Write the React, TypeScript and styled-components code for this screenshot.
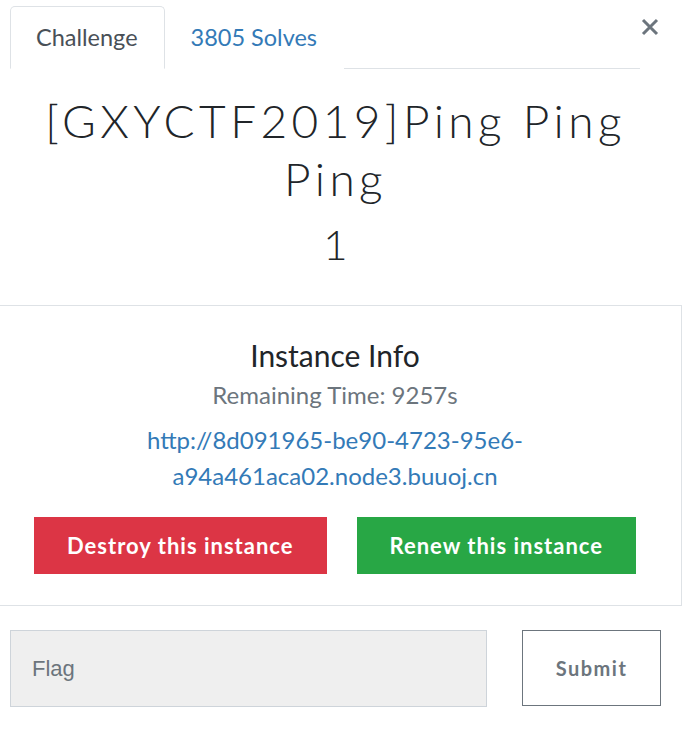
import styled, { createGlobalStyle } from 'styled-components';

const GlobalStyle = createGlobalStyle`
  html, body {
    margin: 0;
    padding: 0;
    background: #fff;
  }
  body {
    font-family: Lato, "Liberation Sans", sans-serif;
    color: #212529;
  }
`;

const Page = styled.div`
  width: 692px;
  height: 737px;
  overflow: hidden;
  display: flex;
  flex-direction: column;
`;

const TopBar = styled.div`
  display: flex;
  align-items: flex-start;
  padding-top: 6px;
  padding-left: 10px;
`;

const Nav = styled.ul`
  list-style: none;
  margin: 0;
  padding: 0;
  display: flex;
  width: 630px;
  border-bottom: 1px solid #dee2e6;
`;

const NavItem = styled.li<{ active?: boolean }>`
  padding: 16px 26px 16px 25px;
  font-size: 23.5px;
  line-height: 29px;
  margin-bottom: -1px;
  color: ${(p) => (p.active ? '#495057' : '#337ab7')};
  background: #fff;
  border: 1px solid ${(p) => (p.active ? '#dee2e6' : 'transparent')};
  border-bottom-color: ${(p) => (p.active ? '#fff' : 'transparent')};
  border-radius: 5px 5px 0 0;
`;

const Close = styled.button`
  border: none;
  background: none;
  padding: 0;
  margin: 11px 0 0 0;
  width: 20px;
  height: 20px;
  display: flex;
  align-items: center;
  justify-content: center;
  cursor: pointer;
`;

const Main = styled.div`
  width: 671px;
  display: flex;
  flex-direction: column;
  align-items: center;
`;

const Title = styled.h2`
  margin: 23px 0 0;
  font-family: Lato, "Liberation Sans", sans-serif;
  font-weight: 300;
  font-size: 46px;
  line-height: 58px;
  letter-spacing: 4.4px;
  text-align: center;
  color: #212529;
  width: 640px;
`;

const Value = styled.h3`
  margin: 12px 0 0;
  font-weight: 300;
  font-size: 42px;
  line-height: 48px;
  color: #212529;
`;

const Panel = styled.div`
  align-self: flex-start;
  margin: 37px 0 0 -12px;
  width: 694px;
  box-sizing: border-box;
  border: 1px solid #dee2e6;
  padding: 31px 0 31px;
  display: flex;
  flex-direction: column;
  align-items: center;
`;

const PanelTitle = styled.h4`
  margin: 0;
  font-weight: 400;
  font-size: 30px;
  line-height: 36px;
  color: #212529;
`;

const Muted = styled.div`
  margin-top: 4px;
  font-size: 24px;
  line-height: 36px;
  color: #6c757d;
`;

const Link = styled.a`
  margin-top: 9px;
  width: 440px;
  text-align: center;
  font-size: 24px;
  line-height: 36px;
  color: #337ab7;
  text-decoration: none;
  word-break: break-word;
`;

const Buttons = styled.div`
  display: flex;
  gap: 30px;
  margin-top: 23px;
`;

const ActionButton = styled.button<{ tone: 'danger' | 'success' }>`
  border: none;
  border-radius: 0;
  height: 57px;
  padding: 0 33px;
  font-family: Lato, "Liberation Sans", sans-serif;
  font-weight: 700;
  font-size: 22px;
  letter-spacing: 1px;
  color: #fff;
  background: ${(p) => (p.tone === 'danger' ? '#dc3545' : '#28a745')};
`;

const FlagRow = styled.div`
  display: flex;
  align-items: flex-start;
  margin-top: 24px;
  padding-left: 10px;
`;

const FlagInput = styled.input`
  width: 477px;
  height: 77px;
  box-sizing: border-box;
  border: 1px solid #ced4da;
  background: #efefef;
  padding: 0 21px;
  font-family: "Liberation Sans", Arial, sans-serif;
  font-size: 22px;
  color: #495057;
  outline: none;
  &::placeholder {
    color: #6c757d;
  }
`;

const SubmitButton = styled.button`
  margin-left: 35px;
  width: 139px;
  height: 76px;
  box-sizing: border-box;
  border: 1px solid #6c757d;
  background: #fff;
  font-family: Lato, "Liberation Sans", sans-serif;
  font-weight: 700;
  font-size: 20px;
  letter-spacing: 1.5px;
  color: #6c757d;
`;

export default function App() {
  return (
    <Page>
      <GlobalStyle />
      <TopBar>
        <Nav>
          <NavItem active>Challenge</NavItem>
          <NavItem>3805 Solves</NavItem>
        </Nav>
        <Close aria-label="Close">
          <svg width="18" height="18" viewBox="0 0 18 18">
            <path d="M2 2 L16 16 M16 2 L2 16" stroke="#6c757d" strokeWidth="3" />
          </svg>
        </Close>
      </TopBar>
      <Main>
        <Title>[GXYCTF2019]Ping Ping Ping</Title>
        <Value>1</Value>
        <Panel>
          <PanelTitle>Instance Info</PanelTitle>
          <Muted>Remaining Time: 9257s</Muted>
          <Link href="#">http://8d091965-be90-4723-95e6-a94a461aca02.node3.buuoj.cn</Link>
          <Buttons>
            <ActionButton tone="danger">Destroy this instance</ActionButton>
            <ActionButton tone="success">Renew this instance</ActionButton>
          </Buttons>
        </Panel>
      </Main>
      <FlagRow>
        <FlagInput placeholder="Flag" />
        <SubmitButton>Submit</SubmitButton>
      </FlagRow>
    </Page>
  );
}
